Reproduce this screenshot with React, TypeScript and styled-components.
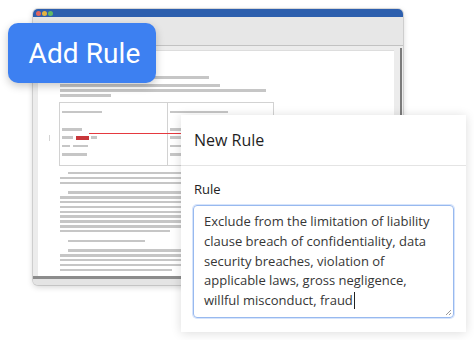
import React from 'react'
import styled, { createGlobalStyle } from 'styled-components'

const GlobalStyle = createGlobalStyle`
    html, body {
        margin: 0;
        padding: 0;
        background: #ffffff;
    }
`

const Scene = styled.main`
    position: relative;
    width: 474px;
    height: 340px;
    overflow: hidden;
    box-sizing: border-box;
    padding: 9px 0 0 33px;
    background: #ffffff;
`

const Window = styled.div`
    width: 370px;
    height: 276px;
    display: flex;
    flex-direction: column;
    background: #ececec;
    border-radius: 5px;
    overflow: hidden;
    box-shadow: 0 0 0 1px rgba(0, 0, 0, 0.12), 0 2px 6px rgba(0, 0, 0, 0.18);
`

const TitleBar = styled.div`
    height: 8px;
    flex: none;
    display: flex;
    align-items: center;
    gap: 1px;
    padding-left: 3px;
    background: #2d5fae;
`

const Dot = styled.span<{ $color: string }>`
    width: 5px;
    height: 5px;
    border-radius: 50%;
    background: ${({ $color }) => $color};
`

const Toolbar = styled.div`
    height: 28px;
    flex: none;
    background: #e7e7e7;
    border-bottom: 1px solid #c2c2c2;
`

const Body = styled.div`
    flex: 1;
    display: flex;
    padding: 2px 0 0 5px;
    min-height: 0;
`

const Page = styled.div`
    position: relative;
    width: 356px;
    margin-top: 2px;
    box-sizing: border-box;
    padding: 25px 0 0 22px;
    background: #ffffff;
    border-top: 1px solid #dddddd;
    display: flex;
    flex-direction: column;
    overflow: hidden;
`

const Scrollbar = styled.div`
    width: 2px;
    margin-left: 6px;
    background: #7b7b7b;
`

const BottomEdge = styled.div`
    height: 3px;
    flex: none;
    background: #8c8c8c;
`

const BottomFrame = styled.div`
    height: 6px;
    flex: none;
    background: #e4e4e4;
`

const Para = styled.div<{ $mt: number; $gap?: number }>`
    display: flex;
    flex-direction: column;
    gap: ${({ $gap }) => $gap ?? 2.35}px;
    margin-top: ${({ $mt }) => $mt}px;
`

const Line = styled.div<{ $w: number; $indent?: boolean }>`
    height: 2.5px;
    width: ${({ $w }) => $w}px;
    margin-left: ${({ $indent }) => ($indent ? 8 : 0)}px;
    background: #c6c6c6;
`

const MarginMark = styled.div`
    position: absolute;
    left: 11px;
    top: 84px;
    width: 1px;
    height: 6px;
    background: #d4d4d4;
`

const Table = styled.div`
    margin: 5.5px 0 0 -1px;
    width: 215px;
    height: 64px;
    box-sizing: border-box;
    border: 1px solid #d2d2d2;
    display: grid;
    grid-template-columns: 107px 1fr;
`

const Cell = styled.div`
    padding: 7.5px 0 0 2px;
    display: flex;
    flex-direction: column;
    gap: 5.8px;
    & + & {
        border-left: 1px solid #d2d2d2;
    }
`

const CellHead = styled.div<{ $w: number }>`
    height: 2.5px;
    width: ${({ $w }) => $w}px;
    margin-bottom: 9.2px;
    background: #c6c6c6;
`

const CellRow = styled.div`
    display: flex;
    align-items: center;
    gap: 2.5px;
    height: 2.5px;
`

const Seg = styled.span<{ $w: number; $hit?: boolean }>`
    flex: none;
    width: ${({ $w }) => $w}px;
    height: ${({ $hit }) => ($hit ? 4 : 2.5)}px;
    background: ${({ $hit }) => ($hit ? '#c8373b' : '#c6c6c6')};
`

const Connector = styled.div`
    position: absolute;
    left: 89px;
    top: 132.5px;
    width: 100px;
    height: 1.5px;
    background: #e5393f;
`

const AddButton = styled.div`
    position: absolute;
    left: 8px;
    top: 23px;
    width: 148px;
    height: 60px;
    border-radius: 10px;
    background: #3d80f1;
    box-shadow: 0 3px 8px rgba(0, 0, 0, 0.22);
    display: flex;
    align-items: center;
    justify-content: center;
    padding-left: 5px;
    box-sizing: border-box;
    color: #ffffff;
    font-family: Roboto, "Noto Sans", sans-serif;
    font-size: 28px;
    letter-spacing: 0.1px;
`

const Card = styled.section`
    position: absolute;
    left: 181px;
    top: 115px;
    width: 285px;
    height: 217px;
    background: #ffffff;
    box-shadow: 0 1px 10px rgba(0, 0, 0, 0.14);
    font-family: "Open Sans", "Noto Sans", sans-serif;
    display: flex;
    flex-direction: column;
`

const CardHeader = styled.header`
    height: 50px;
    flex: none;
    display: flex;
    align-items: center;
    padding-left: 13px;
    border-bottom: 1px solid #e4e4e4;
    font-size: 16px;
    color: #1f1f1f;
`

const CardBody = styled.div`
    padding: 14px 12px 0 12px;
    display: flex;
    flex-direction: column;
`

const Label = styled.label`
    font-size: 13px;
    line-height: 18px;
    color: #222222;
    padding-left: 1px;
    margin-bottom: 7px;
`

const RuleBox = styled.div`
    position: relative;
    width: 261px;
    height: 113px;
    box-sizing: border-box;
    padding: 6px 10px;
    border: 1px solid #98b9ef;
    border-radius: 4px;
    box-shadow: 0 0 0 1px #d6e4fb;
    font-size: 13px;
    line-height: 19.8px;
    color: #363636;
`

const Caret = styled.span`
    display: inline-block;
    width: 1px;
    height: 17px;
    margin-left: 1px;
    vertical-align: -4px;
    background: #222222;
`

const Grip = styled.svg`
    position: absolute;
    right: 1px;
    bottom: 1px;
`

const fullLine = 320

export default function App() {
    return (
        <Scene>
            <GlobalStyle />
            <Window>
                <TitleBar>
                    <Dot $color="#e2675e" />
                    <Dot $color="#e3b340" />
                    <Dot $color="#62b965" />
                </TitleBar>
                <Toolbar />
                <Body>
                    <Page>
                        <MarginMark />
                        <Para $mt={0}>
                            <Line $w={141} $indent />
                        </Para>
                        <Para $mt={5.5} $gap={2.6}>
                            <Line $w={160} />
                            <Line $w={206} />
                            <Line $w={51} />
                        </Para>
                        <Table>
                            <Cell>
                                <CellHead $w={40} />
                                <CellRow><Seg $w={20} /></CellRow>
                                <CellRow>
                                    <Seg $w={11} />
                                    <Seg $w={13} $hit />
                                    <Seg $w={6} />
                                </CellRow>
                                <CellRow>
                                    <Seg $w={8} />
                                    <Seg $w={15} />
                                </CellRow>
                                <CellRow><Seg $w={25} /></CellRow>
                            </Cell>
                            <Cell>
                                <CellHead $w={58} />
                                <CellRow><Seg $w={40} /></CellRow>
                                <CellRow><Seg $w={40} /></CellRow>
                                <CellRow><Seg $w={40} /></CellRow>
                                <CellRow><Seg $w={40} /></CellRow>
                            </Cell>
                        </Table>
                        <Para $mt={5.5} $gap={2.5}>
                            <Line $w={fullLine - 8} $indent />
                            <Line $w={fullLine} />
                            <Line $w={fullLine} />
                        </Para>
                        <Para $mt={7}>
                            <Line $w={fullLine - 8} $indent />
                            <Line $w={fullLine} />
                            <Line $w={fullLine} />
                            <Line $w={fullLine} />
                            <Line $w={fullLine} />
                            <Line $w={fullLine} />
                            <Line $w={fullLine} />
                            <Line $w={fullLine} />
                            <Line $w={110} />
                        </Para>
                        <Para $mt={7.1}>
                            <Line $w={77} $indent />
                        </Para>
                        <Para $mt={7.2}>
                            <Line $w={fullLine - 8} $indent />
                            <Line $w={fullLine} />
                            <Line $w={fullLine} />
                            <Line $w={fullLine} />
                            <Line $w={112} />
                        </Para>
                    </Page>
                    <Scrollbar />
                </Body>
                <BottomEdge />
                <BottomFrame />
            </Window>

            <Connector />

            <AddButton>Add Rule</AddButton>

            <Card>
                <CardHeader>New Rule</CardHeader>
                <CardBody>
                    <Label htmlFor="rule">Rule</Label>
                    <RuleBox id="rule" role="textbox">
                        Exclude from the limitation of liability clause breach of confidentiality, data security breaches, violation of applicable laws, gross negligence, willful misconduct, fraud
                        <Caret />
                        <Grip width="7" height="7" viewBox="0 0 7 7">
                            <path d="M6 1 L1 6 M6 4 L4 6" stroke="#9a9a9a" strokeWidth="1" />
                        </Grip>
                    </RuleBox>
                </CardBody>
            </Card>
        </Scene>
    )
}
